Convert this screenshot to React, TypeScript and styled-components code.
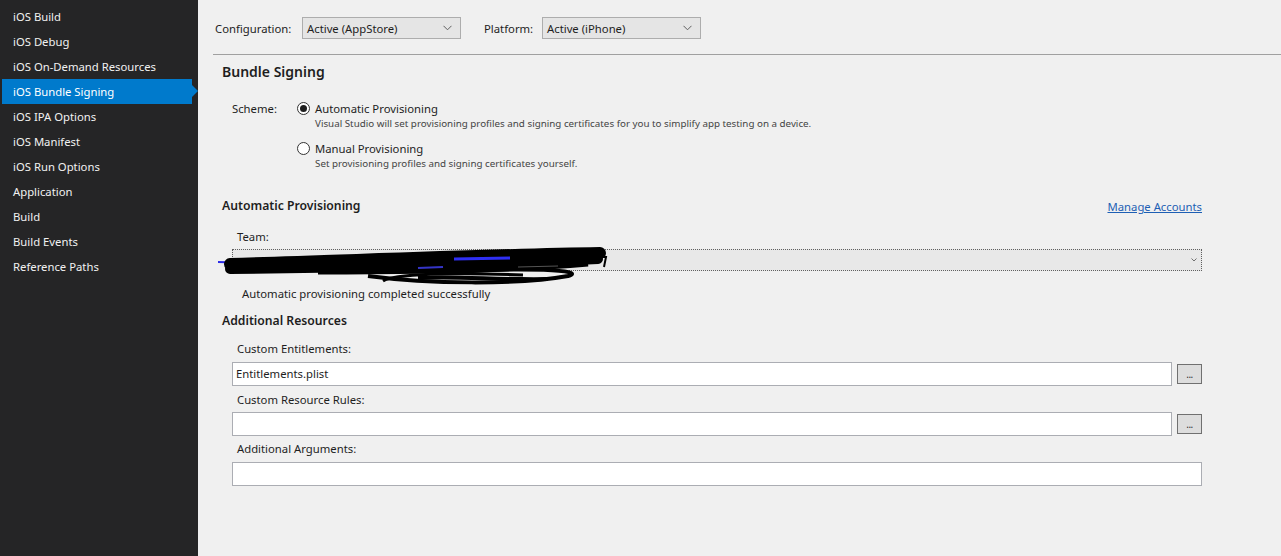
import React from "react";
import styled, { createGlobalStyle, css } from "styled-components";

const Global = createGlobalStyle`
  html, body { margin: 0; padding: 0; }
  body {
    font-family: "Segoe UI", "Noto Sans", "Open Sans", sans-serif;
    font-size: 11.3px;
    color: #1e1e1e;
    background: #f0f0f0;
  }
  * { box-sizing: border-box; }
`;

const Shell = styled.div`
  display: flex;
  width: 1281px;
  height: 556px;
  overflow: hidden;
`;

const Sidebar = styled.nav`
  width: 198px;
  flex: none;
  background: #252526;
  padding-top: 4px;
  display: flex;
  flex-direction: column;
`;

const NavItem = styled.div<{ $active?: boolean }>`
  position: relative;
  height: 25px;
  line-height: 25px;
  margin-left: 2px;
  margin-right: 6px;
  padding-left: 11px;
  color: #f1f1f1;
  font-size: 11.3px;
  white-space: nowrap;
  ${(p) =>
    p.$active &&
    css`
      background: #007acc;
      color: #ffffff;
      &::after {
        content: "";
        position: absolute;
        right: -6px;
        top: 6px;
        border-top: 6.5px solid transparent;
        border-bottom: 6.5px solid transparent;
        border-left: 6px solid #007acc;
      }
    `}
`;

const Main = styled.main`
  flex: 1;
  background: #f0f0f0;
  display: flex;
  flex-direction: column;
`;

const TopBar = styled.div`
  margin-left: 15px;
  padding: 17px 0 15px 2px;
  border-bottom: 1px solid #a0a0a0;
  display: flex;
  align-items: center;
`;

const TopLabel = styled.span<{ $w: number }>`
  font-size: 11.3px;
  width: ${(p) => p.$w}px;
  flex: none;
`;

const SelectBox = styled.div<{ $mr?: number }>`
  width: 159px;
  height: 22px;
  border: 1px solid #adadad;
  background: #e5e5e5;
  display: flex;
  align-items: center;
  justify-content: space-between;
  padding: 0 8px 0 4px;
  font-size: 11.3px;
  margin-right: ${(p) => p.$mr ?? 0}px;
`;

const Content = styled.div`
  padding: 7px 79px 0 24px;
  display: flex;
  flex-direction: column;
`;

const SectionTitle = styled.div<{ $size?: number; $mt?: number }>`
  font-size: ${(p) => p.$size ?? 12.2}px;
  font-weight: 600;
  line-height: 20px;
  margin-top: ${(p) => p.$mt ?? 0}px;
  color: #1e1e1e;
`;

const SchemeRow = styled.div`
  display: grid;
  grid-template-columns: 65px 1fr;
  margin-top: 19px;
  padding-left: 10px;
`;

const SchemeLabel = styled.div`
  line-height: 16px;
  font-size: 11.3px;
`;

const Options = styled.div`
  display: flex;
  flex-direction: column;
  gap: 10px;
`;

const Option = styled.div`
  display: grid;
  grid-template-columns: 18px 1fr;
`;

const Radio = styled.span<{ $checked?: boolean }>`
  width: 13px;
  height: 13px;
  margin-top: 1px;
  border-radius: 50%;
  border: 1px solid #333;
  background: #fff;
  display: flex;
  align-items: center;
  justify-content: center;
  &::after {
    content: "";
    width: 7px;
    height: 7px;
    border-radius: 50%;
    background: ${(p) => (p.$checked ? "#1e1e1e" : "transparent")};
  }
`;

const OptionTitle = styled.div`
  line-height: 16px;
  font-size: 11.3px;
`;

const OptionDesc = styled.div`
  line-height: 14px;
  font-size: 9.8px;
  color: #444;
`;

const HeaderRow = styled.div`
  display: flex;
  justify-content: space-between;
  align-items: center;
  margin-top: 25px;
`;

const Link = styled.a`
  color: #1e5fb4;
  text-decoration: underline;
  font-size: 11.3px;
  margin-top: 1px;
  cursor: pointer;
`;

const FieldLabel = styled.div<{ $mt?: number; $indent?: number }>`
  line-height: 16px;
  font-size: 11.3px;
  margin-top: ${(p) => p.$mt ?? 0}px;
  padding-left: ${(p) => p.$indent ?? 15}px;
`;

const TeamWrap = styled.div`
  position: relative;
  margin-left: 10px;
  margin-top: 4px;
`;

const TeamBox = styled.div`
  height: 22px;
  border: 1px dotted #606060;
  background: #e8e8e8;
  display: flex;
  align-items: center;
  justify-content: flex-end;
  padding-right: 4px;
`;

const Scribble = styled.svg`
  position: absolute;
  left: -14px;
  top: -4px;
  pointer-events: none;
`;

const Status = styled.div`
  margin-top: 15px;
  padding-left: 20px;
  line-height: 16px;
  font-size: 11.3px;
`;

const InputRow = styled.div<{ $mt?: number }>`
  display: flex;
  align-items: center;
  margin-left: 10px;
  margin-top: ${(p) => p.$mt ?? 5}px;
  gap: 5px;
`;

const TextInput = styled.div`
  flex: 1;
  height: 24px;
  background: #ffffff;
  border: 1px solid #abadb3;
  padding: 0 3px;
  line-height: 22px;
  font-size: 11.3px;
`;

const BrowseButton = styled.div`
  width: 25px;
  height: 20px;
  border: 1px solid #707070;
  background: #dddddd;
  font-size: 10px;
  line-height: 18px;
  text-align: center;
  color: #333;
  letter-spacing: -0.5px;
`;

const Chevron = () => (
  <svg width="9" height="6" viewBox="0 0 9 6">
    <path d="M0.5 0.8 L4.5 4.8 L8.5 0.8" fill="none" stroke="#606060" strokeWidth="1" />
  </svg>
);

const SmallChevron = () => (
  <svg width="6" height="4" viewBox="0 0 6 4">
    <path d="M0.5 0.5 L3 3 L5.5 0.5" fill="none" stroke="#707070" strokeWidth="1" />
  </svg>
);

const navItems = [
  "iOS Build",
  "iOS Debug",
  "iOS On-Demand Resources",
  "iOS Bundle Signing",
  "iOS IPA Options",
  "iOS Manifest",
  "iOS Run Options",
  "Application",
  "Build",
  "Build Events",
  "Reference Paths",
];

export default function App() {
  return (
    <>
      <Global />
      <Shell>
        <Sidebar>
          {navItems.map((n) => (
            <NavItem key={n} $active={n === "iOS Bundle Signing"}>
              {n}
            </NavItem>
          ))}
        </Sidebar>
        <Main>
          <TopBar>
            <TopLabel $w={87}>Configuration:</TopLabel>
            <SelectBox $mr={23}>
              <span>Active (AppStore)</span>
              <Chevron />
            </SelectBox>
            <TopLabel $w={58}>Platform:</TopLabel>
            <SelectBox>
              <span>Active (iPhone)</span>
              <Chevron />
            </SelectBox>
          </TopBar>
          <Content>
            <SectionTitle $size={14}>Bundle Signing</SectionTitle>
            <SchemeRow>
              <SchemeLabel>Scheme:</SchemeLabel>
              <Options>
                <Option>
                  <Radio $checked />
                  <div>
                    <OptionTitle>Automatic Provisioning</OptionTitle>
                    <OptionDesc>
                      Visual Studio will set provisioning profiles and signing certificates for you to simplify app testing on a device.
                    </OptionDesc>
                  </div>
                </Option>
                <Option>
                  <Radio />
                  <div>
                    <OptionTitle>Manual Provisioning</OptionTitle>
                    <OptionDesc>Set provisioning profiles and signing certificates yourself.</OptionDesc>
                  </div>
                </Option>
              </Options>
            </SchemeRow>
            <HeaderRow>
              <SectionTitle>Automatic Provisioning</SectionTitle>
              <Link>Manage Accounts</Link>
            </HeaderRow>
            <FieldLabel $mt={13}>Team:</FieldLabel>
            <TeamWrap>
              <TeamBox>
                <SmallChevron />
              </TeamBox>
              <Scribble width="392" height="42" viewBox="0 0 392 42">
                <path d="M0 17 L32 18" stroke="#2a2ae8" strokeWidth="2" fill="none" />
                <path d="M12 19 C120 16 260 10 382 8" stroke="#000" strokeWidth="12" fill="none" strokeLinecap="round" />
                <path d="M12 24 C150 23 280 19 380 14" stroke="#000" strokeWidth="10" fill="none" strokeLinecap="round" />
                <path d="M100 26 C200 26 300 24 370 18" stroke="#000" strokeWidth="7" fill="none" />
                <path d="M150 31 C210 39 300 40 350 31 C372 25 300 22 240 27" stroke="#000" strokeWidth="4" fill="none" />
                <path d="M165 36 C175 29 235 27 305 30" stroke="#000" strokeWidth="3" fill="none" />
                <path d="M200 33 C240 31 280 35 330 34" stroke="#000" strokeWidth="4" fill="none" />
                <path d="M236 14 L292 13" stroke="#2f2ff5" strokeWidth="3" fill="none" />
                <path d="M200 23 L225 22" stroke="#3535c8" strokeWidth="2" fill="none" />
                <path d="M300 22 L340 21" stroke="#555" strokeWidth="1" fill="none" />
                <path d="M376 12 L388 12 L386 22" stroke="#000" strokeWidth="2" fill="none" />
              </Scribble>
            </TeamWrap>
            <Status>Automatic provisioning completed successfully</Status>
            <SectionTitle $mt={9}>Additional Resources</SectionTitle>
            <FieldLabel $mt={10}>Custom Entitlements:</FieldLabel>
            <InputRow $mt={5}>
              <TextInput>Entitlements.plist</TextInput>
              <BrowseButton>...</BrowseButton>
            </InputRow>
            <FieldLabel $mt={6}>Custom Resource Rules:</FieldLabel>
            <InputRow $mt={4}>
              <TextInput />
              <BrowseButton>...</BrowseButton>
            </InputRow>
            <FieldLabel $mt={5}>Additional Arguments:</FieldLabel>
            <InputRow $mt={5}>
              <TextInput />
            </InputRow>
          </Content>
        </Main>
      </Shell>
    </>
  );
}
